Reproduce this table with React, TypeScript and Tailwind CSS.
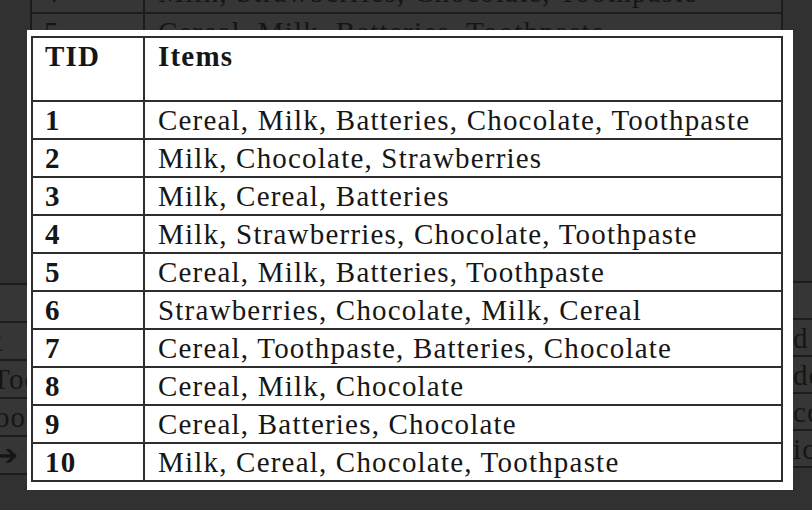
import React from 'react'

const rows: [string, string][] = [
  ['1', 'Cereal, Milk, Batteries, Chocolate, Toothpaste'],
  ['2', 'Milk, Chocolate, Strawberries'],
  ['3', 'Milk, Cereal, Batteries'],
  ['4', 'Milk, Strawberries, Chocolate, Toothpaste'],
  ['5', 'Cereal, Milk, Batteries, Toothpaste'],
  ['6', 'Strawberries, Chocolate, Milk, Cereal'],
  ['7', 'Cereal, Toothpaste, Batteries, Chocolate'],
  ['8', 'Cereal, Milk, Chocolate'],
  ['9', 'Cereal, Batteries, Chocolate'],
  ['10', 'Milk, Cereal, Chocolate, Toothpaste']
]

// faded page rows peeking out from under the lightbox
const leftBits = [
  { text: '', shift: 'ml-0' },
  { text: 'Milk', shift: 'ml-[-58px]' },
  { text: 'Toothpaste', shift: 'ml-[-8px]' },
  { text: 'Toothpaste', shift: 'ml-[-22px]' },
  { text: '➔ Cereal', shift: 'ml-[-6px]' }
]

const rightBits = ['', 'd', 'de', 'co', 'ic']

function BgTableTop() {
  return (
    <div className="mt-[-26px] w-[753px] border-x-2 border-[#1c1c1c] bg-[#363636] text-[#151515]">
      {[
        ['4', 'Milk, Strawberries, Chocolate, Toothpaste'],
        ['5', 'Cereal, Milk, Batteries, Toothpaste']
      ].map(([n, t], i) => (
        <div key={n} className={`flex h-[38px] ${i > 0 ? 'border-t-2 border-[#1c1c1c]' : ''}`}>
          <div className="w-[111px] pl-[12px]">{n}</div>
          <div className="flex-1 border-l-2 border-[#1c1c1c] pl-[13px]">{t}</div>
        </div>
      ))}
    </div>
  )
}

export default function App() {
  return (
    <div className="relative w-[812px] h-[510px] overflow-hidden bg-[#313131] font-['Liberation_Serif',serif] text-[29px] leading-[36px] tracking-[1.2px]">
      {/* page behind the overlay */}
      <div className="flex h-full">
        <div className="w-[30px] overflow-hidden text-[#151515] whitespace-nowrap">
          <div className="h-[283px]" />
          {leftBits.map((b, i) => (
            <div key={i} className="h-[38px] border-t-2 border-[#1c1c1c] bg-[#363636]">
              <div className={b.shift}>{b.text}</div>
            </div>
          ))}
          <div className="border-t-2 border-[#1c1c1c]" />
        </div>
        <div>
          <BgTableTop />
        </div>
        <div className="flex-1 overflow-hidden text-[#151515] whitespace-nowrap">
          <div className="h-[281px]" />
          {rightBits.map((t, i) => (
            <div key={i} className="h-[37px] border-t-2 border-[#1c1c1c] bg-[#363636] pl-[10px]">
              {t}
            </div>
          ))}
          <div className="border-t-2 border-[#1c1c1c]" />
        </div>
      </div>

      {/* lightbox */}
      <div className="absolute left-[27px] top-[30px] w-[766px] h-[460px] bg-white pt-[6px] pl-[4px] pr-[10px] pb-[8px] text-[#161616]">
        <div className="w-[752px] border-2 border-[#2e2e2e]">
          <div className="flex h-[62px] font-bold">
            <div className="w-[110px] pl-[12px]">TID</div>
            <div className="flex-1 border-l-2 border-[#2e2e2e] pl-[13px]">Items</div>
          </div>
          {rows.map(([n, t]) => (
            <div key={n} className="flex h-[38px] border-t-2 border-[#2e2e2e]">
              <div className="w-[110px] pl-[12px] font-bold">{n}</div>
              <div className="flex-1 border-l-2 border-[#2e2e2e] pl-[13px] whitespace-nowrap">{t}</div>
            </div>
          ))}
        </div>
      </div>
    </div>
  )
}
